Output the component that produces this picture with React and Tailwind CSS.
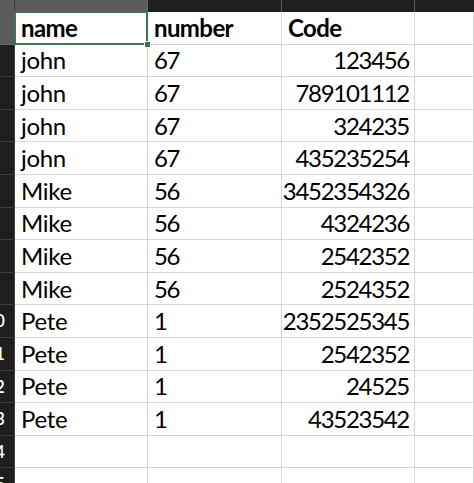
import React from "react";

const rows = [
  ["john", "67", "123456"],
  ["john", "67", "789101112"],
  ["john", "67", "324235"],
  ["john", "67", "435235254"],
  ["Mike", "56", "3452354326"],
  ["Mike", "56", "4324236"],
  ["Mike", "56", "2542352"],
  ["Mike", "56", "2524352"],
  ["Pete", "1", "2352525345"],
  ["Pete", "1", "2542352"],
  ["Pete", "1", "24525"],
  ["Pete", "1", "43523542"],
  ["", "", ""],
  ["", "", ""],
];

function RowHead({ n, active }) {
  return (
    <div
      className={
        "w-[15px] shrink-0 overflow-hidden border-b border-r " +
        (active ? "bg-[#5b5b5b] border-[#6a6a6a]" : "bg-[#1e1e1e] border-[#3d3d3d]")
      }
    >
      <div className="ml-[-25px] w-[40px] h-full flex items-center justify-center text-white text-[17px] font-semibold font-['Lato']">
        {n}
      </div>
    </div>
  );
}

function Cell({ children, right, bold, digits, width }) {
  return (
    <div
      className={
        width +
        " shrink-0 border-r border-b border-[#d6d6d6] flex items-end pb-[1px] leading-[1.2] text-[24px] text-black " +
        (right ? "justify-end pr-[5px] " : "pl-[6px] ") +
        (digits ? "tracking-[-1.3px] " : bold ? "tracking-[-0.6px] " : "tracking-[-0.3px] ") +
        (bold ? "font-bold" : "")
      }
    >
      {children}
    </div>
  );
}

export default function App() {
  return (
    <div className="w-[474px] h-[483px] overflow-hidden bg-white flex flex-col font-['Lato',sans-serif]">
      {/* column headers */}
      <div className="flex h-[12px] shrink-0 bg-[#1e1e1e]">
        <div className="w-[15px] shrink-0 bg-[#5b5b5b] border-r border-[#3a3a3a]"></div>
        <div className="w-[133px] shrink-0 bg-[#5b5b5b] border-r border-[#6a6a6a]"></div>
        <div className="w-[134px] shrink-0 border-r border-[#5a5a5a]"></div>
        <div className="w-[133px] shrink-0 border-r border-[#5a5a5a]"></div>
        <div className="flex-1"></div>
      </div>

      {/* header row */}
      <div className="flex h-[32.6px] shrink-0">
        <RowHead n={1} active />
        <div className="relative w-[133px] shrink-0 border-r border-b border-[#d6d6d6] flex items-end pb-[1px] pl-[6px] leading-[1.2] text-[24px] tracking-[-0.6px] font-bold text-black">
          name
          <div className="absolute inset-[-1px] border-2 border-[#3d7452]"></div>
          <div className="absolute right-[-4px] bottom-[-4px] w-[7px] h-[7px] bg-[#3d7452] border border-white"></div>
        </div>
        <Cell width="w-[134px]" bold>number</Cell>
        <Cell width="w-[133px]" bold>Code</Cell>
        <Cell width="flex-1"></Cell>
      </div>

      {rows.map((r, i) => (
        <div key={i} className="flex h-[32.6px] shrink-0">
          <RowHead n={i + 2} />
          <Cell width="w-[133px]">{r[0]}</Cell>
          <Cell width="w-[134px]" digits>{r[1]}</Cell>
          <Cell width="w-[133px]" right digits>{r[2]}</Cell>
          <Cell width="flex-1"></Cell>
        </div>
      ))}
    </div>
  );
}
